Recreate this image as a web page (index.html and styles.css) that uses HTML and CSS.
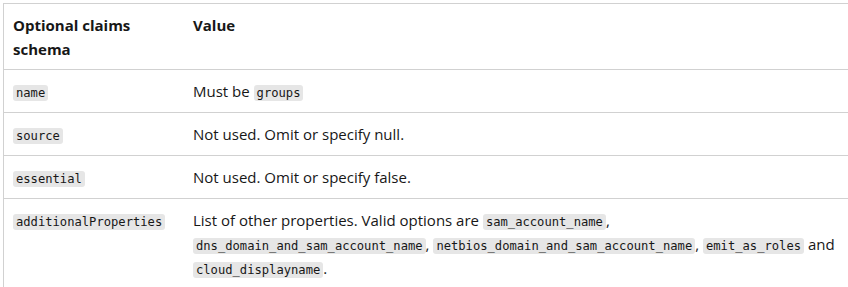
FILE: index.html
```html
<!DOCTYPE html>
<html lang="en">
<head>
<meta charset="utf-8">
<title>Optional claims schema</title>
<link rel="stylesheet" href="styles.css">
</head>
<body>
<table class="schema">
  <thead>
    <tr>
      <th class="col-key">Optional claims schema</th>
      <th class="col-value">Value</th>
    </tr>
  </thead>
  <tbody>
    <tr>
      <td><code>name</code></td>
      <td>Must be <code>groups</code></td>
    </tr>
    <tr>
      <td><code>source</code></td>
      <td>Not used. Omit or specify null.</td>
    </tr>
    <tr>
      <td><code>essential</code></td>
      <td>Not used. Omit or specify false.</td>
    </tr>
    <tr>
      <td><code>additionalProperties</code></td>
      <td>List of other properties. Valid options are <code>sam_account_name</code>, <code>dns_domain_and_sam_account_name</code>, <code>netbios_domain_and_sam_account_name</code>, <code>emit_as_roles</code> and <code>cloud_displayname</code>.</td>
    </tr>
  </tbody>
</table>
</body>
</html>
```
FILE: styles.css
```css
html, body {
  margin: 0;
  padding: 0;
  background: #ffffff;
}

body {
  font-family: "Open Sans", "Noto Sans", sans-serif;
  font-size: 15px;
  line-height: 24px;
  color: #171717;
}

.schema {
  margin: 3px 0 0 3px;
  width: 850px;
  border-collapse: collapse;
  border: 1px solid #d1d1d1;
}

.schema th,
.schema td {
  padding: 9px 9px;
  text-align: left;
  vertical-align: top;
  border-top: 1px solid #d1d1d1;
  border-bottom: 1px solid #d1d1d1;
}

.schema th {
  font-weight: 700;
  padding-bottom: 8px;
}

.schema .col-key {
  width: 162px;
}

.schema code {
  font-family: "DejaVu Sans Mono", "Liberation Mono", monospace;
  font-size: 12.15px;
  line-height: 15px;
  background: #e6e6e6;
  color: #171717;
  padding: 1px 3px;
  border-radius: 3px;
  white-space: nowrap;
}
```
